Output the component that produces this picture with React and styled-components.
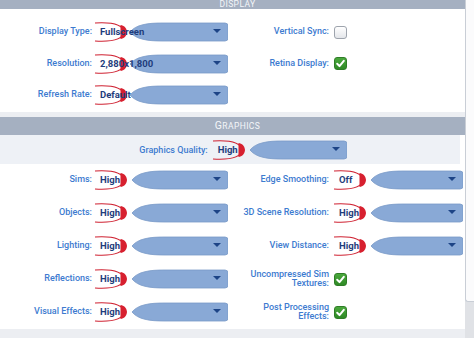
import React from "react";
import styled, { createGlobalStyle } from "styled-components";

const GlobalStyle = createGlobalStyle`
  html, body {
    margin: 0;
    padding: 0;
    background: #ffffff;
    overflow: hidden;
  }
  body {
    font-family: Roboto, "Liberation Sans", sans-serif;
  }
`;

const displayRows = [
    { label: "Display Type:", value: "Fullscreen", tip: 36 },
    { label: "Resolution:", value: "2,880x1,800", tip: 36 },
    { label: "Refresh Rate:", value: "Default", tip: 36 },
];

const graphicsRows = [
    { left: { label: "Sims:", value: "High" }, right: { label: "Edge Smoothing:", value: "Off" } },
    { left: { label: "Objects:", value: "High" }, right: { label: "3D Scene Resolution:", value: "High" } },
    { left: { label: "Lighting:", value: "High" }, right: { label: "View Distance:", value: "High" } },
    { left: { label: "Reflections:", value: "High" }, right: { label: ["Uncompressed Sim", "Textures:"], check: true } },
    { left: { label: "Visual Effects:", value: "High" }, right: { label: ["Post Processing", "Effects:"], check: true } },
];

const Select = ({ value, width = 134, tip = 38 }) => {
    const w = width;
    const blue = `M${tip} 10 C${tip + 6} 2.5, ${tip + 18} 1, ${tip + 32} 1 L${w - 3} 1 Q${w} 1 ${w} 4 L${w} 16 Q${w} 19 ${w - 3} 19 L${tip + 32} 19 C${tip + 18} 19, ${tip + 6} 17.5, ${tip} 10 Z`;
    return (
        <SelectBox $width={w}>
            <svg width={w} height="20" viewBox={`0 0 ${w} 20`}>
                <path d={blue} fill="#89a9d6" stroke="#7a9ac8" strokeWidth="0.8" />
                <path
                    d="M1 1 C18 0, 29 3, 30 10 C29 17, 18 20, 1 19"
                    fill="none"
                    stroke="#cf2030"
                    strokeWidth="1.1"
                />
                <path
                    d="M26.5 3 C30 3.5, 32.5 5.5, 33 10 C32.5 14.5, 30 16.5, 26.5 17 Z"
                    fill="#d7202f"
                />
                <path d={`M${w - 15} 7 L${w - 7} 7 L${w - 11} 11 Z`} fill="#1d4486" />
            </svg>
            <SelectValue>{value}</SelectValue>
        </SelectBox>
    );
};

const Check = ({ checked }) => (
    <CheckBox $checked={checked}>
        {checked && (
            <svg width="11" height="11" viewBox="0 0 11 11">
                <path
                    d="M2.2 5.8 L4.5 8.1 L8.8 2.8"
                    fill="none"
                    stroke="#ffffff"
                    strokeWidth="2"
                    strokeLinecap="round"
                    strokeLinejoin="round"
                />
            </svg>
        )}
    </CheckBox>
);

const Field = ({ side, label, value, check, tip, width }) => (
    <FieldRow>
        <Label $side={side}>
            {Array.isArray(label) ? label.map((l) => <span key={l}>{l}</span>) : label}
        </Label>
        {check !== undefined ? <Check checked={check} /> : <Select value={value} tip={tip} width={width} />}
    </FieldRow>
);

export default function App() {
    return (
        <>
            <GlobalStyle />
            <Screen>
                <Main>
                    <SectionHeader $height={9}>DISPLAY</SectionHeader>
                    <DisplayPanel>
                        <Column>
                            {displayRows.map((r) => (
                                <Field key={r.label} side="left" label={r.label} value={r.value} tip={r.tip} />
                            ))}
                        </Column>
                        <Column>
                            <Field side="right" label="Vertical Sync:" check={false} />
                            <Field side="right" label="Retina Display:" check={true} />
                        </Column>
                    </DisplayPanel>
                    <Divider />
                    <SectionHeader $height={18}>
                        <Caps>G</Caps>RAPHICS
                    </SectionHeader>
                    <QualityBand>
                        <QualityLabel>Graphics Quality:</QualityLabel>
                        <Select value="High" width={135} />
                    </QualityBand>
                    <GraphicsPanel>
                        {graphicsRows.map((r) => (
                            <GridRow key={r.left.label}>
                                <Field side="left" {...r.left} />
                                <Field side="right" {...r.right} width={130} />
                            </GridRow>
                        ))}
                    </GraphicsPanel>
                    <Footer />
                </Main>
                <ScrollTrack>
                    <ScrollThumb />
                </ScrollTrack>
            </Screen>
        </>
    );
}

const Screen = styled.div`
    width: 474px;
    height: 338px;
    display: flex;
    overflow: hidden;
`;

const Main = styled.div`
    width: 465px;
    display: flex;
    flex-direction: column;
    overflow: hidden;
`;

const SectionHeader = styled.div`
    height: ${(p) => p.$height}px;
    background: #a5b0c1;
    color: #f4f6f9;
    display: flex;
    align-items: ${(p) => (p.$height < 12 ? "flex-start" : "center")};
    justify-content: center;
    font-size: 8.5px;
    letter-spacing: 0.4px;
    line-height: ${(p) => (p.$height < 12 ? "8px" : "18px")};
    overflow: hidden;
    padding-left: 10px;
`;

const Caps = styled.span`
    font-size: 10.5px;
`;

const DisplayPanel = styled.div`
    height: 103px;
    display: grid;
    grid-template-columns: 232px 1fr;
    padding-top: 13px;
    box-sizing: border-box;
`;

const Column = styled.div`
    display: flex;
    flex-direction: column;
    gap: 11.5px;
`;

const Divider = styled.div`
    height: 5px;
    background: #eceef2;
`;

const QualityBand = styled.div`
    height: 29px;
    width: 460px;
    background: #eef1f6;
    display: flex;
    align-items: center;
    justify-content: center;
    gap: 4px;
    padding-left: 26px;
    box-sizing: border-box;
`;

const QualityLabel = styled.span`
    font-size: 9px;
    font-weight: 500;
    color: #3d7bd0;
`;

const GraphicsPanel = styled.div`
    display: flex;
    flex-direction: column;
    gap: 13px;
    padding-top: 6px;
    height: 165px;
    box-sizing: border-box;
`;

const GridRow = styled.div`
    display: grid;
    grid-template-columns: 232px 1fr;
`;

const FieldRow = styled.div`
    display: flex;
    align-items: center;
    height: 20px;
`;

const Label = styled.div`
    width: ${(p) => (p.$side === "left" ? 92 : 97)}px;
    margin-right: ${(p) => (p.$side === "left" ? 2 : 4)}px;
    text-align: right;
    font-size: 9px;
    font-weight: 500;
    color: #3d7bd0;
    line-height: 9.5px;
    display: flex;
    flex-direction: column;
    align-items: flex-end;
    white-space: nowrap;
`;

const SelectBox = styled.div`
    position: relative;
    width: ${(p) => p.$width}px;
    height: 20px;
    flex-shrink: 0;

    & > svg {
        position: absolute;
        left: 0;
        top: 0;
    }
`;

const SelectValue = styled.span`
    position: relative;
    display: block;
    padding-left: 6px;
    line-height: 20px;
    font-size: 9.5px;
    font-weight: 700;
    color: #1f3d7c;
`;

const CheckBox = styled.div`
    width: 13px;
    height: 13px;
    margin-left: 1px;
    border-radius: 3px;
    box-sizing: border-box;
    display: flex;
    align-items: center;
    justify-content: center;
    border: 1px solid ${(p) => (p.$checked ? "#2f7d27" : "#9ea4ad")};
    background: ${(p) =>
        p.$checked
            ? "linear-gradient(#4aa83c, #2f8a26)"
            : "linear-gradient(#ffffff, #e4e6ea)"};
`;

const Footer = styled.div`
    flex: 1;
    background: #eceef2;
`;

const ScrollTrack = styled.div`
    width: 9px;
    display: flex;
    flex-direction: column;
    background: #e0e2e6;
`;

const ScrollThumb = styled.div`
    height: 302px;
    background: #fbfbfc;
    border-left: 1px solid #c9ced6;
    border-bottom: 1px solid #c9ced6;
    border-bottom-left-radius: 3px;
    box-sizing: border-box;
`;
